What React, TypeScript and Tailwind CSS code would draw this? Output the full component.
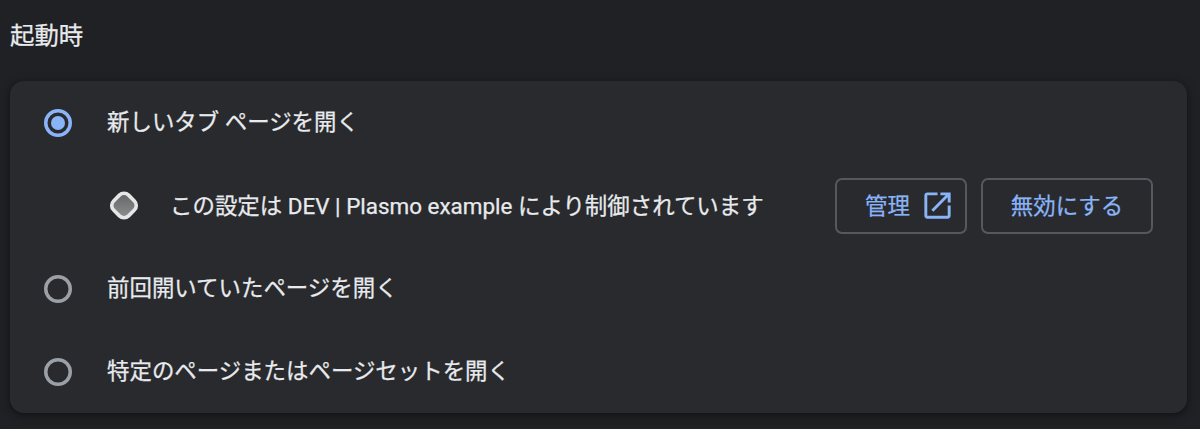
import { useState } from "react";

type StartupMode = "newTab" | "continue" | "specific";

const options: { id: StartupMode; label: string }[] = [
  { id: "newTab", label: "新しいタブ ページを開く" },
  { id: "continue", label: "前回開いていたページを開く" },
  { id: "specific", label: "特定のページまたはページセットを開く" },
];

function RadioRow({ label, checked, onSelect }: { label: string; checked: boolean; onSelect: () => void }) {
  return (
    <button
      role="radio"
      aria-checked={checked}
      onClick={onSelect}
      className="flex h-[83px] w-full items-center pl-[34px] text-left"
    >
      <svg
        className={`size-7 shrink-0 ${checked ? "text-[#8ab4f8]" : "text-[#9aa0a6]"}`}
        viewBox="0 0 28 28"
      >
        <circle cx="14" cy="14" r="12.25" fill="none" stroke="currentColor" strokeWidth="3.5" />
        {checked && <circle cx="14" cy="14" r="7" fill="currentColor" />}
      </svg>
      <span className="ml-[35px] whitespace-nowrap pt-px">{label}</span>
    </button>
  );
}

function ExtensionIcon() {
  return (
    <svg className="size-8 shrink-0" viewBox="0 0 32 32">
      <defs>
        <linearGradient id="extFill" x1="0" y1="0" x2="1" y2="1">
          <stop offset="0" stopColor="#606163" />
          <stop offset="1" stopColor="#919294" />
        </linearGradient>
      </defs>
      <rect
        x="5.4"
        y="4.9"
        width="21.2"
        height="21.2"
        rx="6.5"
        transform="rotate(45 16 15.5)"
        fill="url(#extFill)"
        stroke="#e6e6e8"
        strokeWidth="3.6"
      />
    </svg>
  );
}

function OpenInNewIcon() {
  return (
    <svg className="size-[35px] shrink-0" viewBox="0 0 24 24" fill="currentColor">
      <path d="M19 19H5V5h7V3H5c-1.11 0-2 .9-2 2v14c0 1.1.89 2 2 2h14c1.1 0 2-.9 2-2v-7h-2v7zM14 3v2h3.59l-9.83 9.83 1.41 1.41L19 6.41V10h2V3h-7z" />
    </svg>
  );
}

function ControlledIndicator() {
  return (
    <div className="flex h-[83px] items-center pl-[98px] pr-[34px]">
      <ExtensionIcon />
      <span className="ml-[30px] flex-1 whitespace-nowrap pt-0.5">
        この設定は DEV | Plasmo example により制御されています
      </span>
      <div className="flex gap-3.5 text-[#8ab4f8]">
        <button className="flex h-14 w-[132px] items-center rounded-[7px] border-2 border-[#55585c] pl-7">
          <span className="mr-2.5 whitespace-nowrap pt-0.5">管理</span>
          <OpenInNewIcon />
        </button>
        <button className="h-14 w-[172px] whitespace-nowrap rounded-[7px] border-2 border-[#55585c] pt-0.5">
          無効にする
        </button>
      </div>
    </div>
  );
}

export default function App() {
  const [mode, setMode] = useState<StartupMode>("newTab");

  return (
    <div className="h-[429px] w-[1200px] overflow-hidden bg-[#202124] pl-[10px] pr-[13px] font-['Roboto','Noto_Sans_CJK_JP',sans-serif] text-[22.45px] text-[#e8eaed] [-webkit-text-stroke:0.25px_currentColor]">
      <h2 className="flex h-[81px] items-start pt-[18px] text-[24.4px] leading-9">起動時</h2>
      <div
        role="radiogroup"
        className="h-[332px] rounded-[14px] bg-[#292a2d] shadow-[0_2px_4px_rgba(0,0,0,0.3),0_2px_10px_3px_rgba(0,0,0,0.15)]"
      >
        {options.map((option) => (
          <div key={option.id}>
            <RadioRow
              label={option.label}
              checked={mode === option.id}
              onSelect={() => setMode(option.id)}
            />
            {/* The extension overrides the new tab page */}
            {option.id === "newTab" && <ControlledIndicator />}
          </div>
        ))}
      </div>
    </div>
  );
}
